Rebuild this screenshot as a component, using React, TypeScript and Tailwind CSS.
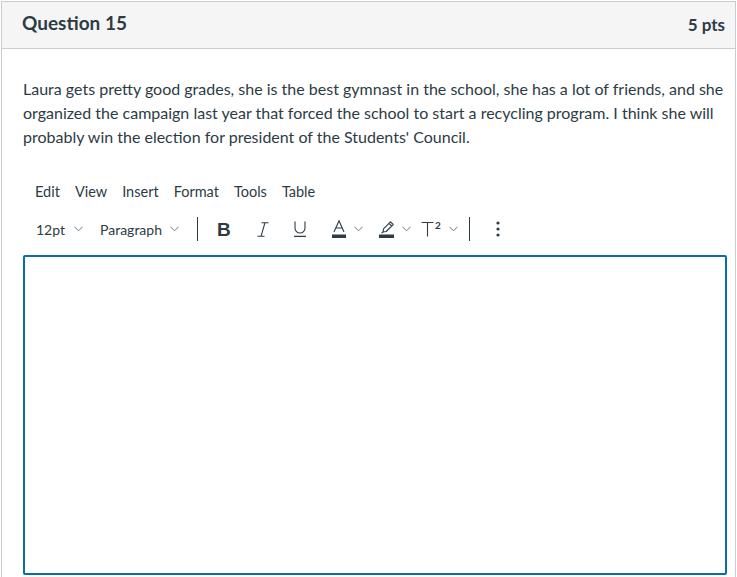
import React from "react";

const font = { fontFamily: "Lato, 'Noto Sans', Arial, sans-serif" };

function Chevron({ ml = "ml-[9px]" }: { ml?: string }) {
  return (
    <svg width="9" height="6" viewBox="0 0 9 6" className={`${ml} text-[#68777d]`}>
      <path d="M0.5 0.8 L4.5 4.8 L8.5 0.8" fill="none" stroke="currentColor" strokeWidth="1" />
    </svg>
  );
}

function Divider() {
  return <div className="h-[24px] w-px bg-[#2d3b45]" />;
}

const menus = ["Edit", "View", "Insert", "Format", "Tools", "Table"];

export default function App() {
  return (
    <div className="min-h-[577px] bg-white pl-px pt-px" style={font}>
      <div className="h-[600px] w-[735px] border border-[#c7cdd1] text-[#2d3b45]">
        <header className="flex h-[47px] items-center justify-between border-b border-[#c7cdd1] bg-[#f5f5f5] pl-[20px] pr-[10px]">
          <h2 className="-mt-[3px] text-[19px] font-bold text-[#2d3b45]">Question 15</h2>
          <span className="text-[17px] font-bold text-[#2d3b45]">5 pts</span>
        </header>

        <div className="pl-[21px] pr-[8px] pt-[28px]">
          <p className="text-[16px] leading-[24px]">
            Laura gets pretty good grades, she is the best gymnast in the school, she has a lot of friends, and she
            organized the campaign last year that forced the school to start a recycling program. I think she will
            probably win the election for president of the Students' Council.
          </p>

          <div className="mt-[29px] flex h-[28px] items-center gap-[15px] pl-[12px] text-[14.5px]">
            {menus.map((m) => (
              <span key={m}>{m}</span>
            ))}
          </div>

          <div className="mt-[8px] flex h-[30px] items-center pl-[13px] text-[14px]">
            <span className="flex items-center">
              12pt
              <Chevron />
            </span>
            <span className="ml-[17px] flex items-center">
              Paragraph
              <Chevron ml="ml-[8px]" />
            </span>
            <div className="ml-[18px]">
              <Divider />
            </div>
            <span
              className="ml-[19px] w-[14px] text-[19px] font-bold leading-none"
              style={{ fontFamily: "'Liberation Sans', Arial, sans-serif" }}
            >
              B
            </span>
            <svg width="12" height="15" viewBox="0 0 12 15" className="ml-[26px]">
              <path d="M4.5 0.7 H11.5 M0.5 14.3 H7.5 M8 0.7 L4 14.3" fill="none" stroke="#2d3b45" strokeWidth="1.1" />
            </svg>
            <svg width="14" height="16" viewBox="0 0 14 16" className="ml-[24px]">
              <path d="M2 0.5 V7 A5 5 0 0 0 12 7 V0.5 M1 15.4 H13" fill="none" stroke="#2d3b45" strokeWidth="1.1" />
            </svg>
            <span className="ml-[25px] flex items-center">
              <svg width="14" height="18" viewBox="0 0 14 18">
                <path d="M2 12 L7 0.8 L12 12 M3.8 8 H10.2" fill="none" stroke="#2d3b45" strokeWidth="1.1" />
                <rect x="0" y="14.5" width="14" height="3.5" fill="#2d3b45" />
              </svg>
              <Chevron ml="ml-[8px]" />
            </span>
            <span className="ml-[16px] flex items-center">
              <svg width="16" height="18" viewBox="0 0 16 18">
                <path d="M4 12 L4.5 8.8 L11.5 1.8 L14.2 4.5 L7.2 11.5 Z M4 12 L2.5 13 M10 3.3 L12.7 6" fill="none" stroke="#2d3b45" strokeWidth="1.1" strokeLinejoin="round" />
                <rect x="0" y="14.5" width="15" height="3.5" fill="#2d3b45" />
              </svg>
              <Chevron ml="ml-[7px]" />
            </span>
            <span className="ml-[10px] flex items-center">
              <svg width="13" height="16" viewBox="0 0 13 16">
                <path d="M0.5 1.5 H12.5 M6.5 1.5 V15.5" fill="none" stroke="#2d3b45" strokeWidth="1.1" />
              </svg>
              <span className="-mt-[9px] ml-[1px] text-[10px] font-bold leading-none">2</span>
              <Chevron ml="ml-[8px]" />
            </span>
            <div className="ml-[11px]">
              <Divider />
            </div>
            <svg width="4" height="16" viewBox="0 0 4 16" className="ml-[26px]">
              <circle cx="2" cy="2" r="1.6" fill="#2d3b45" />
              <circle cx="2" cy="8" r="1.6" fill="#2d3b45" />
              <circle cx="2" cy="14" r="1.6" fill="#2d3b45" />
            </svg>
          </div>

          <div className="mt-[11px] h-[320px] w-[704px] rounded-[2px] border-2 border-[#0770a3]" />
        </div>
      </div>
    </div>
  );
}
